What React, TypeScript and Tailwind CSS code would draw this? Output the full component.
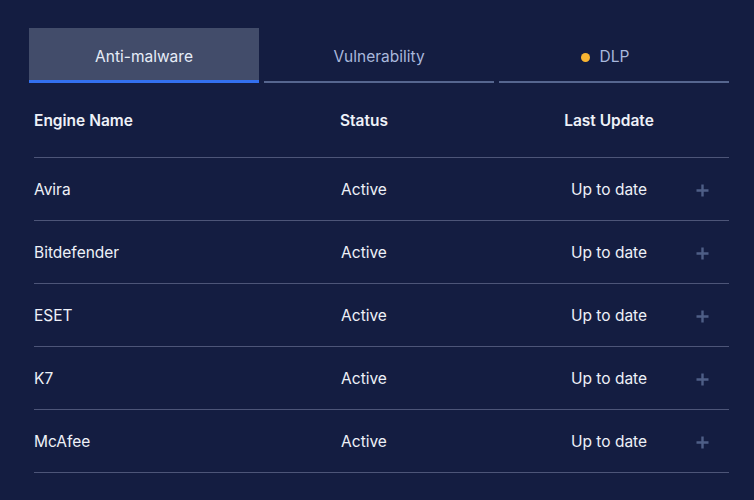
const engines = ["Avira", "Bitdefender", "ESET", "K7", "McAfee"];

const cols = "grid grid-cols-[151px_358px_132px_54px] items-center";

const PlusIcon = () => (
  <svg width="13" height="13" viewBox="0 0 13 13" fill="none" stroke="#4e5e86" strokeWidth="2.4">
    <path d="M6.5 0.5v12M0.5 6.5h12" />
  </svg>
);

export default function App() {
  return (
    <div
      className="w-[754px] h-[500px] bg-[#141d41] text-[#eef1f8] overflow-hidden"
      style={{ fontFamily: "Inter, 'Noto Sans', sans-serif" }}
    >
      <div className="pt-[28px] pl-[29px] flex gap-[5px]">
        <button className="w-[230px] shrink-0 h-[55px] pt-[5px] flex items-center justify-center bg-[#424c6a] border-b-[3px] border-[#3370ef] text-[15.5px] text-[#e6ecf8]">
          Anti-malware
        </button>
        <button className="w-[230px] shrink-0 h-[55px] pt-[5px] flex items-center justify-center border-b-2 border-[#56668f] text-[15.5px] text-[#a9b8dc]">
          Vulnerability
        </button>
        <button className="w-[230px] shrink-0 h-[55px] pt-[5px] pr-[18px] flex items-center justify-center gap-[10px] border-b-2 border-[#56668f] text-[15.5px] text-[#a9b8dc]">
          <span className="w-[9px] h-[9px] rounded-full bg-[#f8b432]" />
          DLP
        </button>
      </div>

      <div className="mx-[34px] w-[695px]">
        <div className={`${cols} h-[75px] border-b border-[#4d5578] text-[15.5px] font-semibold pt-[2px]`}>
          <div>Engine Name</div>
          <div className="text-center">Status</div>
          <div className="text-center">Last Update</div>
          <div />
        </div>
        {engines.map((name) => (
          <div key={name} className={`${cols} h-[63px] border-b border-[#4d5578] text-[15.5px] pt-[2px]`}>
            <div>{name}</div>
            <div className="text-center">Active</div>
            <div className="text-center">Up to date</div>
            <div className="flex justify-center">
              <PlusIcon />
            </div>
          </div>
        ))}
      </div>
    </div>
  );
}
